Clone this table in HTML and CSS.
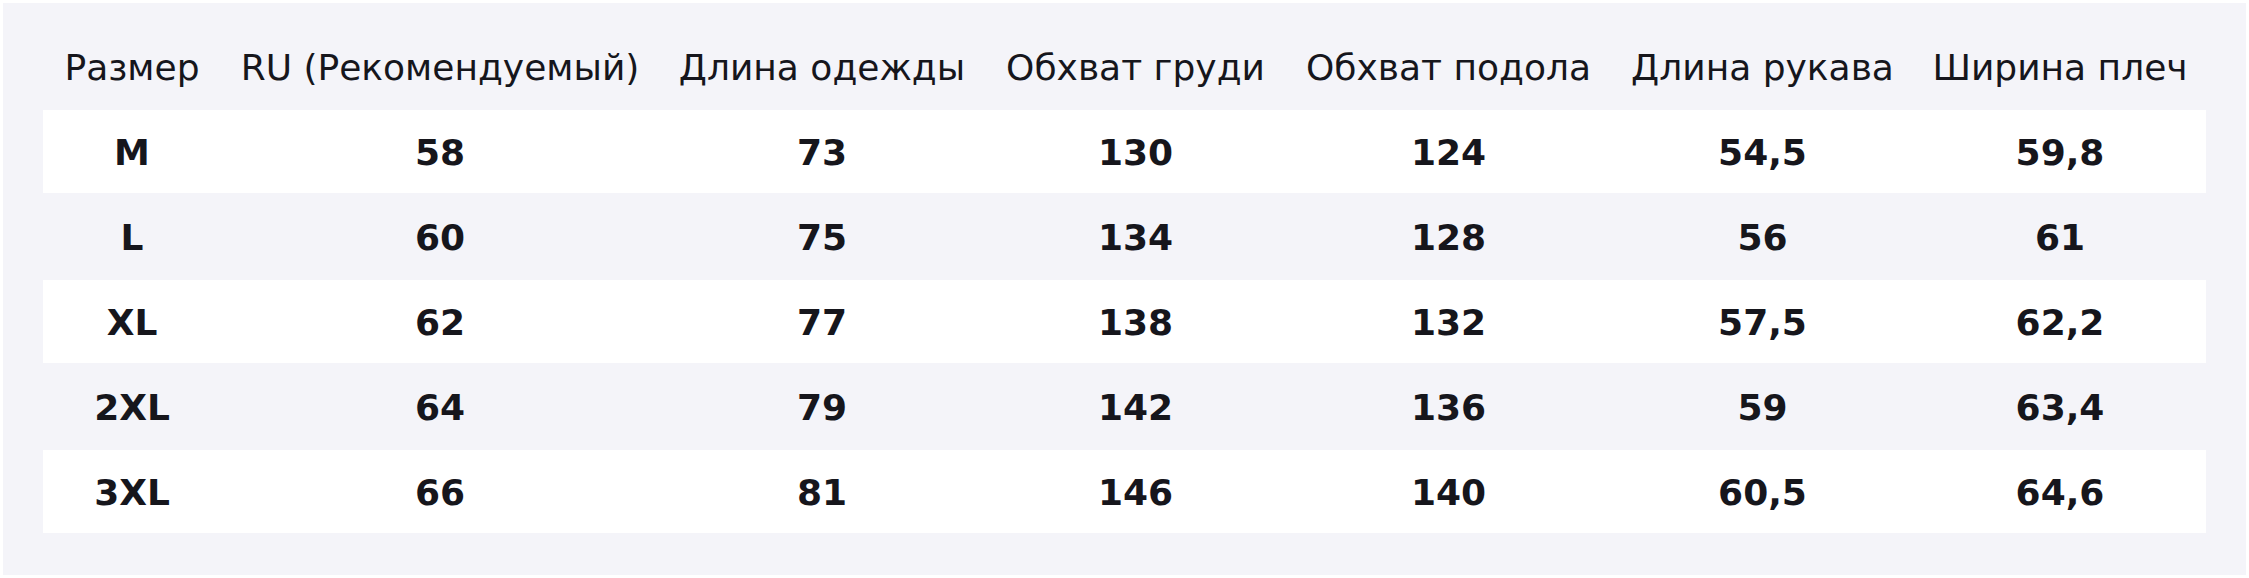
FILE: index.html
```html
<!DOCTYPE html>
<html lang="ru">
<head>
<meta charset="utf-8">
<title>Таблица размеров</title>
<link rel="stylesheet" href="styles.css">
</head>
<body>
<div class="panel">
  <table class="sizes">
    <colgroup>
      <col class="c1"><col class="c2"><col class="c3"><col class="c4"><col class="c5"><col class="c6"><col class="c7">
    </colgroup>
    <thead>
      <tr>
        <th>Размер</th>
        <th>RU (Рекомендуемый)</th>
        <th>Длина одежды</th>
        <th>Обхват груди</th>
        <th>Обхват подола</th>
        <th>Длина рукава</th>
        <th>Ширина плеч</th>
      </tr>
    </thead>
    <tbody>
      <tr class="light"><td>M</td><td>58</td><td>73</td><td>130</td><td>124</td><td>54,5</td><td>59,8</td></tr>
      <tr><td>L</td><td>60</td><td>75</td><td>134</td><td>128</td><td>56</td><td>61</td></tr>
      <tr class="light"><td>XL</td><td>62</td><td>77</td><td>138</td><td>132</td><td>57,5</td><td>62,2</td></tr>
      <tr><td>2XL</td><td>64</td><td>79</td><td>142</td><td>136</td><td>59</td><td>63,4</td></tr>
      <tr class="light"><td>3XL</td><td>66</td><td>81</td><td>146</td><td>140</td><td>60,5</td><td>64,6</td></tr>
    </tbody>
  </table>
</div>
</body>
</html>
```
FILE: styles.css
```css
html, body {
  margin: 0;
  padding: 0;
  background: #ffffff;
}
body {
  padding: 3px;
  font-family: "DejaVu Sans", "Noto Sans", sans-serif;
  color: #16161c;
}
.panel {
  background: #f4f4f9;
  height: 572px;
  box-sizing: border-box;
  padding: 22px 40px 40px;
}
.sizes {
  width: 2163px;
  table-layout: fixed;
  border-collapse: separate;
  border-spacing: 0;
}
.c1 { width: 178px; }
.c2 { width: 438px; }
.c3 { width: 326px; }
.c4 { width: 301px; }
.c5 { width: 325px; }
.c6 { width: 303px; }
.c7 { width: 292px; }
.sizes th {
  height: 85px;
  padding: 0;
  font-size: 36px;
  font-weight: normal;
  text-align: center;
  white-space: nowrap;
  vertical-align: middle;
}
.sizes td {
  height: 81px;
  padding: 2px 0 0;
  border-bottom: 2px solid transparent;
  background-clip: padding-box;
  font-size: 36px;
  font-weight: bold;
  text-align: center;
  vertical-align: middle;
}
.sizes tr.light td {
  background-color: #ffffff;
}
```
